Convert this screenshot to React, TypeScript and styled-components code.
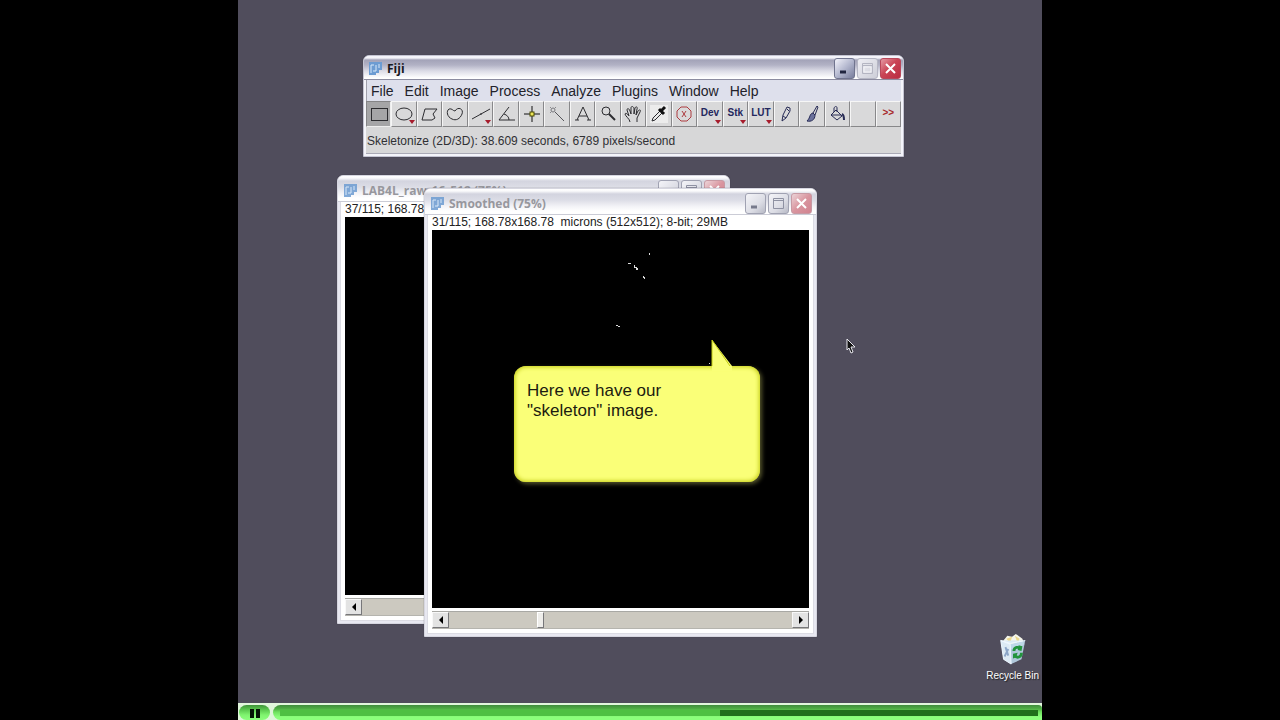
import React from "react";
import styled, { createGlobalStyle, css } from "styled-components";

const GlobalStyle = createGlobalStyle`
  * { box-sizing: border-box; }
  body { margin: 0; background: #000; font-family: "Liberation Sans", Arial, sans-serif; }
  button { font-family: inherit; padding: 0; margin: 0; border: 0; }
`;

const Page = styled.div`
  display: flex;
  justify-content: center;
  min-height: 100vh;
  background: #000;
`;

const Screen = styled.main`
  display: flex;
  flex-direction: column;
  width: 100%;
  max-width: 804px;
  overflow: hidden;
  background: #504d5c;
`;

const Desktop = styled.div`
  position: relative;
  flex: 1;
  min-height: 640px;
`;

const Frame = styled.section<{ $x: number; $y: number; $w: number; $active?: boolean }>`
  position: absolute;
  left: ${(p) => p.$x}px;
  top: ${(p) => p.$y}px;
  width: ${(p) => p.$w}px;
  padding: 0 2px 2px;
  border: 1px solid ${(p) => (p.$active ? "#c4c4d2" : "#d6d6e0")};
  border-radius: 6px 6px 0 0;
  background: ${(p) => (p.$active ? "#f4f4fa" : "#e8e8f1")};
  box-shadow: 0 0 1px #34323f;
`;

const TitleBar = styled.header<{ $active?: boolean }>`
  display: flex;
  align-items: center;
  gap: 4px;
  height: ${(p) => (p.$active ? 24 : 26)}px;
  margin: 0 -2px;
  padding: ${(p) => (p.$active ? "2px 2px 0 4px" : "4px 4px 0 5px")};
  border-radius: 5px 5px 0 0;
  border-bottom: 1px solid ${(p) => (p.$active ? "#8c8ca0" : "#cbccd6")};
  background: ${(p) =>
    p.$active
      ? "linear-gradient(#f4f4fa 0, #f4f4fa 2px, #a3a3b8 4px, #b2b2c5 9px, #dcdce6 15px, #fff 22px)"
      : "linear-gradient(#fff 0, #fafafc 2px, #d3d4df 5px, #dcdde6 11px, #f2f2f6 17px, #fff 22px)"};
`;

const Title = styled.h1<{ $active?: boolean }>`
  flex: 1;
  margin: 0;
  overflow: hidden;
  white-space: nowrap;
  font: bold 12px/18px "Open Sans", "Noto Sans", sans-serif;
  color: ${(p) => (p.$active ? "#17171d" : "#97979d")};
`;

const Controls = styled.div`
  display: flex;
  gap: 2px;
`;

const ControlButton = styled.button<{ $active?: boolean; $close?: boolean }>`
  display: grid;
  place-items: center;
  width: 21px;
  height: 21px;
  border: 1px solid ${(p) => (p.$close ? (p.$active ? "#b8475a" : "#c79aa4") : p.$active ? "#70748e" : "#a0a2b2")};
  border-radius: 3px;
  background: ${(p) =>
    p.$close
      ? p.$active
        ? "linear-gradient(135deg, #e69aa4, #ca4556 45%, #ba2b40)"
        : "linear-gradient(135deg, #ecd4d8, #d9959f 50%, #d18390)"
      : p.$active
        ? "linear-gradient(135deg, #f2f2fa, #b4b8cf 50%, #777c9b)"
        : "linear-gradient(135deg, #f4f4f8, #dcdde5 60%, #b8bac6)"};
  &:disabled { border-color: #b5b6c4; background: linear-gradient(135deg, #eeeef4, #cdced8); }
`;

const MenuBar = styled.nav`
  display: flex;
  gap: 11px;
  height: 21px;
  padding-left: 4px;
  border-left: 1px solid #a0a0ac;
  background: #dee0ec;
`;

const MenuButton = styled.button`
  background: none;
  font-size: 14px;
  line-height: 20px;
  color: #22222a;
`;

const ToolBar = styled.div`
  display: grid;
  grid-template-columns: repeat(21, 1fr);
  height: 26px;
  background: #d9d9da;
`;

const Tool = styled.button<{ $on?: boolean }>`
  position: relative;
  display: grid;
  place-items: center;
  border: 1px solid;
  border-color: #f6f6f6 #88888a #88888a #f6f6f6;
  background: #d9d9da;
  ${(p) =>
    p.$on &&
    css`
      border-color: #848486 #eee #eee #848486;
      background: #a5a5a7;
    `}
`;

const ToolText = styled.span<{ $red?: boolean }>`
  padding-bottom: 2px;
  font: bold 10px/14px "Liberation Sans", sans-serif;
  color: ${(p) => (p.$red ? "#a82a2c" : "#24285e")};
`;

const Glyph = styled.svg`
  display: block;
  width: 22px;
  height: 22px;
  fill: none;
  stroke: #2c2c30;
`;

const DropMark = styled.span`
  position: absolute;
  right: 1px;
  bottom: 2px;
  border: 3px solid transparent;
  border-top: 4px solid #a61c2c;
  border-bottom: 0;
`;

const Status = styled.p`
  height: 27px;
  margin: 0;
  padding: 0 1px;
  overflow: hidden;
  background: #d7d7d8;
  border-bottom: 1px solid #aaaab6;
  white-space: nowrap;
  font-size: 12px;
  line-height: 29px;
  color: #303034;
`;

const ImageBody = styled.div`
  padding: 0 4px 4px;
  border: 1px solid #dcdce4;
  border-top: 0;
  background: #fff;
`;

const Info = styled.p`
  height: 15px;
  margin: 0;
  overflow: hidden;
  white-space: pre;
  font-size: 12px;
  line-height: 15px;
  color: #222;
`;

const Canvas = styled.svg`
  display: block;
  width: 100%;
  height: 378px;
  background: #000;
  fill: #ddd;
`;

const ScrollRow = styled.div`
  display: flex;
  height: 18px;
  margin-top: 3px;
  border-top: 1px solid #a8a8a4;
  border-bottom: 1px solid #b5b4ae;
  background: #ccc9c0;
`;

const Arrow = styled.button`
  display: grid;
  place-items: center;
  width: 17px;
  height: 16px;
  border: 1px solid;
  border-color: #f8f8f8 #77777a #77777a #f8f8f8;
  background: #e3e3e3;
`;

const Slice = styled.input`
  appearance: none;
  flex: 1;
  min-width: 0;
  height: 16px;
  margin: 0;
  background: #ccc9c0;
  &::-webkit-slider-thumb {
    appearance: none;
    width: 7px;
    height: 16px;
    border: 1px solid;
    border-color: #fff #77777a #77777a #fff;
    background: #eeedea;
  }
`;

const Balloon = styled.aside`
  position: absolute;
  left: 276px;
  top: 366px;
  width: 246px;
  height: 116px;
  padding: 15px 13px;
  border-radius: 12px;
  background: #faff78;
  box-shadow: inset 0 0 4px 1px #c2cb12, 2px 2px 4px #55552c;
  font-size: 17px;
  line-height: 20px;
  color: #1c1c10;
  p { margin: 0; }
`;

const Tail = styled.svg`
  position: absolute;
  left: 196px;
  top: -28px;
  width: 24px;
  height: 34px;
`;

const Pointer = styled.svg`
  position: absolute;
  left: 608px;
  top: 338px;
  width: 10px;
  height: 16px;
`;

const DesktopIcon = styled.button`
  position: absolute;
  right: 3px;
  bottom: 20px;
  display: flex;
  flex-direction: column;
  align-items: center;
  gap: 4px;
  background: none;
  font-size: 10px;
  line-height: 14px;
  white-space: nowrap;
  color: #fff;
  text-shadow: 1px 1px 1px #222;
  svg { width: 32px; height: 32px; }
`;

const Player = styled.footer`
  display: flex;
  gap: 3px;
  height: 17px;
  border-top: 2px solid #e2f7dd;
  background: #dff5da;
`;

const PauseButton = styled.button`
  display: flex;
  justify-content: center;
  align-items: center;
  gap: 2px;
  width: 31px;
  margin-left: 1px;
  border-radius: 8px;
  background: linear-gradient(#3f943a, #5dcb50 5px, #80f470 10px, #8cff7c);
  span { width: 4px; height: 9px; margin-top: 1px; background: #041504; }
`;

const Track = styled.div`
  display: flex;
  align-items: center;
  flex: 1;
  padding: 1px 4px 0 7px;
  border-radius: 8px 4px 0 8px;
  background: linear-gradient(#3f8c3c, #50b045 4px, #6ee05e 7px, #8cff7c 12px);
`;

const Seek = styled.input`
  appearance: none;
  flex: 1;
  min-width: 0;
  height: 6px;
  margin: 0;
  background: linear-gradient(90deg, #4fc043 58%, #20701b 58%);
  &::-webkit-slider-thumb { appearance: none; width: 1px; height: 6px; background: #4fc043; }
`;

const tools: { name: string; art?: React.ReactNode; text?: string; red?: boolean; drop?: boolean }[] = [
  { name: "Rectangle", art: <rect x="3.500" y="5.500" width="16" height="12" /> },
  { name: "Oval", drop: true, art: <ellipse cx="11" cy="11" rx="8" ry="6" /> },
  { name: "Polygon", art: <path d="M6 6h12l-4 5 2 4-3 2H3z" /> },
  { name: "Freehand", art: <path d="M11 8C14 3 20 6 18 11c-2 5-6 7-10 5C3 14 2 8 5 6c3-1 4 2 6 2z" /> },
  { name: "Line", drop: true, art: <path d="M2 16 20 6M10 11h2" /> },
  { name: "Angle", art: <path d="M14 4 4 17h16M9 11c3 1 5 3 5 6" /> },
  { name: "Point", art: <><path d="M11 3v16M3 11h16" stroke="#111" /><rect x="9" y="9" width="4" height="4" fill="#eee65a" stroke="#494900" /></> },
  { name: "Wand", art: <><path d="m9 9 9 9" stroke="#55555a" /><circle cx="7" cy="7" r="2" stroke="#77777c" /><path d="M4 4l1 1M10 4l-1 1M4 10l1-1" stroke="#88888c" /></> },
  { name: "Text", art: <path d="M5 17 11 4l6 13M7 13h8M3 17h4M15 17h4" /> },
  { name: "Magnifier", art: <><circle cx="9" cy="8" r="4" /><path d="m12 11 6 6" strokeWidth="2" /></> },
  { name: "Hand", art: <path d="M8 19c0-3-5-6-5-8 1-2 3 1 4 2L5 7c0-2 2-2 3 1l1 3V5c0-2 2-2 3 0v6l1-6c1-2 3-1 2 1l-1 6 2-4c2-2 3-1 2 1l-3 6v4" /> },
  { name: "Color picker", art: <><rect x="2" y="2" width="18" height="18" fill="#ececec" stroke="none" /><path d="m4 18 1-3 7-7 2 2-7 7z" /><path d="m11 6 5 5M13 8l4-4" stroke="#111" strokeWidth="3" /></> },
  { name: "Action", art: <><path d="M8 4h6l4 4v6l-4 4H8l-4-4V8z" stroke="#ad3c40" /><path d="m9 8 4 6M13 8l-4 6" stroke="#ad3c40" /></> },
  { name: "Developer menu", text: "Dev", drop: true },
  { name: "Stacks menu", text: "Stk", drop: true },
  { name: "LUT menu", text: "LUT", drop: true },
  { name: "Pencil", art: <path d="m7 18 1-6 4-8 3 1v3l-4 7zM8 13l3 2M12 6l2 2" stroke="#272b55" /> },
  { name: "Brush", art: <><path d="m12 10 4-7 1 1-3 8" stroke="#272b55" /><path d="M12 10c-4 1-2 4-6 8 4 1 8-1 8-6z" stroke="#272b55" fill="#6b719c" /></> },
  { name: "Flood fill", art: <><path d="m5 12 5-5 6 6-5 4zM8 9V5c1-2 3-2 3 0v4M5 12h10" stroke="#272b55" /><path d="M16 11c2 1 2 4 2 6" stroke="#272b55" strokeWidth="2" /></> },
  { name: "Empty slot" },
  { name: "More tools", text: ">>", red: true },
];

const AppLogo = ({ active }: { active?: boolean }) => (
  <svg width="15" height="15" viewBox="0 0 15 15" opacity={active ? 1 : 0.85} aria-hidden="true">
    <path d="M1 1h13v8h-3v3H8v2H1z" fill="#6d9cd2" />
    <path d="M3 12V4h3M8 4v6H5M11 3v4" fill="none" stroke="#d9e9fa" />
  </svg>
);

function WindowControls({ active, noMax }: { active?: boolean; noMax?: boolean }) {
  const mark = active ? "#20253f" : "#777a8c";
  return (
    <Controls>
      <ControlButton $active={active} aria-label="Minimize">
        <svg width="15" height="15"><path d="M3 11h6" stroke={mark} strokeWidth="3" /></svg>
      </ControlButton>
      <ControlButton $active={active} disabled={noMax} aria-label="Maximize">
        <svg width="15" height="15">
          <path d="M2.500 2.500h10v10h-10zM3 4.500h9" fill="none" stroke={noMax ? "#b4b5c2" : "#8e91a2"} />
          {noMax && <path d="M4 6h7v5H4z" fill="none" stroke="#f4f4f8" />}
        </svg>
      </ControlButton>
      <ControlButton $active={active} $close aria-label="Close">
        <svg width="15" height="15"><path d="m3 3 9 9M12 3l-9 9" stroke="#fff" strokeWidth="2" /></svg>
      </ControlButton>
    </Controls>
  );
}

function ImageWindow(props: { x: number; y: number; title: string; info: string; slice: number; children?: React.ReactNode }) {
  return (
    <Frame $x={props.x} $y={props.y} $w={393}>
      <TitleBar>
        <AppLogo />
        <Title>{props.title}</Title>
        <WindowControls />
      </TitleBar>
      <ImageBody>
        <Info>{props.info}</Info>
        <Canvas viewBox="0 0 377 378" aria-label={props.title}>{props.children}</Canvas>
        <ScrollRow>
          <Arrow aria-label="Previous slice"><svg width="6" height="8"><path d="M5 0v8L1 4z" /></svg></Arrow>
          <Slice type="range" min={1} max={115} defaultValue={props.slice} aria-label="Slice" />
          <Arrow aria-label="Next slice"><svg width="6" height="8"><path d="M1 0v8l4-4z" /></svg></Arrow>
        </ScrollRow>
      </ImageBody>
    </Frame>
  );
}

export default function App() {
  return (
    <Page>
      <GlobalStyle />
      <Screen>
        <Desktop>
          <Frame $x={125} $y={55} $w={541} $active>
            <TitleBar $active>
              <AppLogo active />
              <Title $active>Fiji</Title>
              <WindowControls active noMax />
            </TitleBar>
            <MenuBar>
              {["File", "Edit", "Image", "Process", "Analyze", "Plugins", "Window", "Help"].map((m) => (
                <MenuButton key={m}>{m}</MenuButton>
              ))}
            </MenuBar>
            <ToolBar>
              {tools.map((t, i) => (
                <Tool key={t.name} aria-label={t.name} $on={i === 0}>
                  {t.art && <Glyph viewBox="0 0 22 22">{t.art}</Glyph>}
                  {t.text && <ToolText $red={t.red}>{t.text}</ToolText>}
                  {t.drop && <DropMark />}
                </Tool>
              ))}
            </ToolBar>
            <Status>Skeletonize (2D/3D): 38.609 seconds, 6789 pixels/second</Status>
          </Frame>

          <ImageWindow x={99} y={175} title="LAB4L_raw_16_512 (75%)" info="37/115; 168.78x168.78  microns (512x512); 8-bit; 29MB" slice={37} />
          <ImageWindow x={186} y={188} title="Smoothed (75%)" info="31/115; 168.78x168.78  microns (512x512); 8-bit; 29MB" slice={31}>
            <path d="M217 23h1v2h-1zM196 33h3v1h-3zM202 35h1v2h2v1h1v2h-2v-2h-2zM211 46h1v1h1v2h-1v-1h-1zM184 95h2v1h2v1h-2v-1h-2zM277 133h1v1h-1z" />
          </ImageWindow>

          <Balloon>
            <Tail viewBox="0 0 24 34">
              <path d="M2 2v31h20V28z" fill="#faff78" />
              <path d="M2 28V2l18 26" fill="none" stroke="#c2cb12" strokeWidth="1" />
            </Tail>
            <p>Here we have our<br />"skeleton" image.</p>
          </Balloon>

          <Pointer viewBox="0 0 10 16">
            <path d="M1 1v11l2-2 2 5 2-1-2-5h4z" fill="#111" stroke="#e8e8ee" />
          </Pointer>

          <DesktopIcon>
            <svg viewBox="0 0 32 34" aria-hidden="true">
              <path d="m5 9 5-6 5 1 4-3 7 5 2 6-8 6L8 16z" fill="#f4f5ea" />
              <path d="m9 6 6-2-2 7zM18 3l5 3-2 5z" fill="#ecd88b" />
              <path d="m3 8 10 4 16-4-4 20-11 5-8-5z" fill="#b9d5e8" opacity=".9" />
              <path d="m3 8 10 4 1 21-8-5zM3 8l10 3 16-3" fill="#dceaf4" stroke="#eff8ff" />
              <path d="m8 15 3 9M11 17l-4 8" stroke="#8ca6c8" strokeWidth="2" />
              <path d="M17 19c0-4 5-5 7-2M25 21c0 5-5 6-7 3" fill="none" stroke="#23943d" strokeWidth="3" />
              <path d="m22 13 4 1-1 5-4-1zM16 22l5-1-2 5-3 1z" fill="#23943d" />
            </svg>
            Recycle Bin
          </DesktopIcon>
        </Desktop>
        <Player>
          <PauseButton aria-label="Pause"><span /><span /></PauseButton>
          <Track>
            <Seek type="range" min={0} max={100} defaultValue={58} aria-label="Playback position" />
          </Track>
        </Player>
      </Screen>
    </Page>
  );
}
